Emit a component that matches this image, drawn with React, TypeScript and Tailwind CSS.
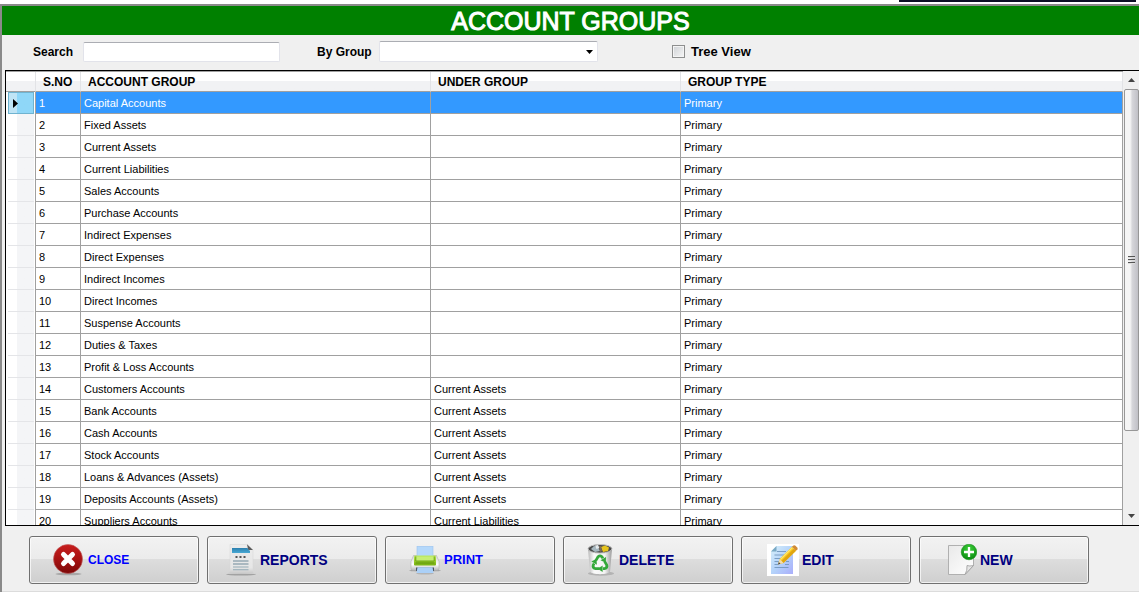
import { useState, type ReactNode } from "react";

type Account = { name: string; under: string };

const accounts: Account[] = [
  { name: "Capital Accounts", under: "" },
  { name: "Fixed Assets", under: "" },
  { name: "Current Assets", under: "" },
  { name: "Current Liabilities", under: "" },
  { name: "Sales Accounts", under: "" },
  { name: "Purchase Accounts", under: "" },
  { name: "Indirect Expenses", under: "" },
  { name: "Direct Expenses", under: "" },
  { name: "Indirect Incomes", under: "" },
  { name: "Direct Incomes", under: "" },
  { name: "Suspense Accounts", under: "" },
  { name: "Duties & Taxes", under: "" },
  { name: "Profit & Loss Accounts", under: "" },
  { name: "Customers Accounts", under: "Current Assets" },
  { name: "Bank Accounts", under: "Current Assets" },
  { name: "Cash Accounts", under: "Current Assets" },
  { name: "Stock Accounts", under: "Current Assets" },
  { name: "Loans & Advances (Assets)", under: "Current Assets" },
  { name: "Deposits Accounts (Assets)", under: "Current Assets" },
  { name: "Suppliers Accounts", under: "Current Liabilities" },
];

function Icon({ children }: { children: ReactNode }) {
  return (
    <svg viewBox="0 0 32 32" className="h-8 w-8 shrink-0" aria-hidden="true">
      {children}
    </svg>
  );
}

function CloseIcon() {
  return (
    <Icon>
      <defs>
        <linearGradient id="closeFill" x1="0" y1="0" x2="0" y2="1">
          <stop offset="0" stopColor="#c81e1e" />
          <stop offset="0.5" stopColor="#a81212" />
          <stop offset="1" stopColor="#7c0a0a" />
        </linearGradient>
      </defs>
      <ellipse cx="15.500" cy="30" rx="13" ry="1.3" fill="#a8a8a8" />
      <circle cx="15" cy="15" r="14.500" fill="url(#closeFill)" stroke="#c06060" strokeWidth="0.6" />
      <path d="M10.500 10.500l9 9M19.500 10.500l-9 9" stroke="#fff" strokeWidth="5" strokeLinecap="round" />
    </Icon>
  );
}

function ReportIcon() {
  return (
    <Icon>
      <defs>
        <linearGradient id="reportPage" x1="0" y1="0" x2="0" y2="1">
          <stop offset="0" stopColor="#ececec" />
          <stop offset="0.8" stopColor="#e6e6e6" />
          <stop offset="1" stopColor="#c9c9c9" />
        </linearGradient>
        <linearGradient id="reportBar" x1="0" y1="0" x2="0" y2="1">
          <stop offset="0" stopColor="#2b7fae" />
          <stop offset="1" stopColor="#49a9d4" />
        </linearGradient>
      </defs>
      <ellipse cx="16" cy="30.3" rx="15" ry="1.3" fill="#a2a2a2" />
      <path d="M5 .5h17l6 5.5v20l1 3.500H3.500l1.500-3.500z" fill="url(#reportPage)" stroke="#d6d6d6" strokeWidth="0.500" />
      <path d="M22 .3l6 5.700h-4.800z" fill="#5c5c5c" />
      <path d="M7 4h15.500l1.500 2.500h1V9H7z" fill="url(#reportBar)" />
      <path d="M10.500 13h2M14.500 13h2M18.500 13h2" stroke="#555" strokeWidth="1.800" />
      <path d="M8 17h15.500M8 20h15.500" stroke="#6f8a99" strokeWidth="1.100" />
      <path d="M8 23h15.500M8 25.700h15.500" stroke="#93a9b4" strokeWidth="1.100" />
    </Icon>
  );
}

function PrintIcon() {
  return (
    <Icon>
      <defs>
        <linearGradient id="printGreen" x1="0" y1="0" x2="0" y2="1">
          <stop offset="0" stopColor="#b9e860" />
          <stop offset="0.5" stopColor="#9bd12a" />
          <stop offset="1" stopColor="#76b010" />
        </linearGradient>
        <linearGradient id="printBody" x1="0" y1="0" x2="0" y2="1">
          <stop offset="0" stopColor="#d4d4d4" />
          <stop offset="0.6" stopColor="#fdfdfd" />
          <stop offset="1" stopColor="#b5b5b5" />
        </linearGradient>
      </defs>
      <ellipse cx="16" cy="26.500" rx="16" ry="1.200" fill="#a3a3a3" />
      <ellipse cx="16" cy="29.500" rx="9" ry="0.900" fill="#b4b4b4" />
      <path d="M4.500 11.500h23l2.500 6v7q0 2-2 2H4q-2 0-2-2v-7z" fill="url(#printBody)" stroke="#aaa" strokeWidth="0.500" />
      <rect x="8" y="2.300" width="16" height="11" fill="#b4d8fb" stroke="#9cc4ee" strokeWidth="0.600" />
      <rect x="5" y="11.500" width="22" height="10" rx="1" fill="url(#printGreen)" />
      <path d="M6.800 12.500v4.500h18.400v-4.500" fill="#c6ef74" stroke="#689d10" strokeWidth="0.900" />
      <path d="M6.500 19h19" stroke="#5d920c" strokeWidth="1" />
      <path d="M7 23.500h18V27H7z" fill="#4c5660" />
      <path d="M8.500 23.300h15L24.500 29h-17z" fill="#abd0f7" />
    </Icon>
  );
}

function RecycleArm({ turn }: { turn: number }) {
  return (
    <g transform={`rotate(${turn} 16 19.5)`}>
      <path d="M11.800 16.600l2.300-3.900q1.900-1.800 3.800 0l1 1.700" fill="none" stroke="#34a83a" strokeWidth="2.700" />
      <path d="M16.500 16.200l5.500-3.200-.2 5.800z" fill="#34a83a" />
    </g>
  );
}

function DeleteIcon() {
  return (
    <Icon>
      <defs>
        <linearGradient id="binSide" x1="0" y1="0" x2="1" y2="0">
          <stop offset="0" stopColor="#b9b9b9" />
          <stop offset="0.25" stopColor="#fafafa" />
          <stop offset="0.7" stopColor="#f3f3f3" />
          <stop offset="1" stopColor="#9b9b9b" />
        </linearGradient>
      </defs>
      <ellipse cx="17" cy="29.500" rx="13" ry="2.200" fill="#b3b3b3" />
      <path d="M4 5l2 22.500c1 3.500 19 3.500 20 0L28 5z" fill="url(#binSide)" />
      <ellipse cx="16" cy="4.800" rx="12" ry="4.300" fill="#4b4b4b" stroke="#c2c2c2" strokeWidth="1" />
      <path d="M7 5l3-3 4 1 2 4-5 1z" fill="#a6b7bf" />
      <path d="M11 1.500l3-.5 1.500 3-3 1z" fill="#e4eaed" />
      <path d="M17 3l4-1.500 4 2-1 3.500-5 1z" fill="#e6c41e" />
      <path d="M15 2l2 0 1 5-2 1z" fill="#7c6a59" />
      <RecycleArm turn={0} />
      <RecycleArm turn={120} />
      <RecycleArm turn={240} />
    </Icon>
  );
}

function EditIcon() {
  return (
    <Icon>
      <defs>
        <linearGradient id="editPage" x1="0" y1="0" x2="1" y2="1">
          <stop offset="0" stopColor="#d8f0fa" />
          <stop offset="0.5" stopColor="#b4d3fa" />
          <stop offset="1" stopColor="#a9aefb" />
        </linearGradient>
      </defs>
      <rect width="32" height="32" fill="#fff" />
      <path d="M9.500 2H26v28H4V7.500z" fill="url(#editPage)" />
      <path d="M9.500 2v5.500H4z" fill="#7aa9c4" />
      <path d="M10 7.500h9M7.500 11h10M7.500 14.500h8M7.500 17.500h6M7.500 20.500h4M7.500 23.500h14M18 20.500h4M19 17.500h3" stroke="#7296bd" strokeWidth="0.900" />
      <path d="M11 20.500l1.700-5.500L25 2.800l4 4L16.500 19z" fill="#f7c51d" />
      <path d="M14.500 17L27 4.800l2 2L16.500 19z" fill="#e0a510" />
      <path d="M13.500 15.500L25.500 3.500" stroke="#ffe66a" strokeWidth="1.200" />
      <path d="M11 20.500l1.700-5.500 3.800 4z" fill="#f3dcae" />
      <path d="M11 20.500l.8-2.500 1.700 1.700z" fill="#444" />
      <path d="M25 2.800l1.500-1.300q1-.6 2 .3l1.700 1.700q.9 1 .2 2L29 6.800z" fill="#d18a35" />
    </Icon>
  );
}

function NewIcon() {
  return (
    <Icon>
      <defs>
        <linearGradient id="newPage" x1="0" y1="0" x2="1" y2="1">
          <stop offset="0" stopColor="#e9e9e9" />
          <stop offset="1" stopColor="#ffffff" />
        </linearGradient>
        <radialGradient id="newBadge" cx="0.5" cy="0.3" r="0.7">
          <stop offset="0" stopColor="#3ed23a" />
          <stop offset="1" stopColor="#0a8a10" />
        </radialGradient>
      </defs>
      <path d="M3.500 1.500h25v20l-8.500 9H3.500z" fill="url(#newPage)" stroke="#a9a9a9" strokeWidth="0.900" />
      <path d="M28.500 21.500q-4 1-6.500 0 .5 5-2 9z" fill="#e6e6e6" stroke="#9a9a9a" strokeWidth="0.800" />
      <circle cx="24" cy="8" r="7.800" fill="url(#newBadge)" stroke="#128a14" strokeWidth="0.500" />
      <path d="M24 3v10M19 8h10" stroke="#fff" strokeWidth="2.300" />
    </Icon>
  );
}

const actions = [
  { label: "CLOSE", icon: <CloseIcon />, style: "pl-[23px] text-xs text-[#0000ff]" },
  { label: "REPORTS", icon: <ReportIcon />, style: "pl-[17px] text-sm text-[#000080]" },
  { label: "PRINT", icon: <PrintIcon />, style: "pl-[23px] text-[13px] text-[#0000ff]" },
  { label: "DELETE", icon: <DeleteIcon />, style: "pl-5 text-sm text-[#000080]" },
  { label: "EDIT", icon: <EditIcon />, style: "pl-[25px] text-sm text-[#000080]" },
  { label: "NEW", icon: <NewIcon />, style: "pl-[25px] text-sm text-[#000080]" },
];

function ScrollBar() {
  return (
    <div className="flex w-4 shrink-0 flex-col bg-[#f0f0f0] pl-px" aria-hidden="true">
      <div className="flex h-[18px] items-center justify-center">
        <svg viewBox="0 0 7 4" className="h-1 w-[7px]">
          <path d="M0 4L3.500 0 7 4z" fill="#444" />
        </svg>
      </div>
      <div className="flex h-[342px] items-center justify-center rounded-xs border border-[#979797] bg-linear-to-r from-[#f5f5f5] from-40% via-[#d6d6da] via-55% to-[#c0c0c6]">
        <svg viewBox="0 0 7 8" className="h-2 w-[7px]">
          <path d="M0 .5h7M0 3.500h7M0 6.500h7" stroke="#555" />
          <path d="M0 1.500h7M0 4.500h7M0 7.500h7" stroke="#ddd" />
        </svg>
      </div>
      <div className="mt-auto flex h-[18px] items-center justify-center">
        <svg viewBox="0 0 7 4" className="h-1 w-[7px]">
          <path d="M0 0h7L3.500 4z" fill="#444" />
        </svg>
      </div>
    </div>
  );
}

const headCell =
  "h-5 border-r border-b border-r-[#e2e3e6] border-b-[#a0a0a0] bg-linear-to-b from-white from-45% to-[#f1f2f4] to-45% p-0 pl-[7px] text-left align-middle text-xs leading-4 font-bold";
const cell = "h-[22px] border-r border-b border-[#a0a0a0] p-0 pl-[3px] leading-4 whitespace-nowrap";

export default function App() {
  const [selected, setSelected] = useState(0);

  return (
    <div className="flex h-screen flex-col overflow-hidden bg-white font-['Liberation_Sans',Arial,sans-serif] text-black">
      <div className="flex h-1 shrink-0 items-start justify-end pr-[3px]">
        <div className="h-0.5 w-[237px] bg-[#0c0f26]" />
      </div>
      <main className="flex min-h-0 flex-1 flex-col border-t-2 border-l-2 border-[#8a8a8a] bg-[#f0f0f0]">
        <h1 className="flex h-[29px] shrink-0 items-center justify-center bg-[#008000] text-[25px] leading-7 text-white [-webkit-text-stroke:1px_white]">
          ACCOUNT GROUPS
        </h1>

        <form className="flex h-[35px] shrink-0 items-center pb-0.5 pl-[31px] text-xs font-bold" onSubmit={(e) => e.preventDefault()}>
          <label htmlFor="search" className="w-[50px]">
            Search
          </label>
          <input
            id="search"
            type="text"
            className="h-5 w-[197px] rounded-xs border border-[#e2e3ea] border-t-[#abadb3] bg-white px-1 font-normal outline-none"
          />
          <label htmlFor="group" className="ml-[37px] w-[62px]">
            By Group
          </label>
          <div className="relative">
            <select
              id="group"
              className="block h-[21px] w-[219px] appearance-none rounded-xs border border-[#e2e3ea] border-t-[#abadb3] bg-white px-1 font-normal outline-none"
            >
              <option value="" />
              <option>Current Assets</option>
              <option>Current Liabilities</option>
            </select>
            <svg viewBox="0 0 7 4" className="pointer-events-none absolute top-[9px] right-[5px] h-1 w-[7px]" aria-hidden="true">
              <path d="M0 0h7L3.500 4z" fill="#000" />
            </svg>
          </div>
          <input
            id="tree"
            type="checkbox"
            className="ml-[74px] h-[13px] w-[13px] appearance-none border border-[#8e8f8f] bg-linear-to-br from-[#cfd2d6] to-[#f6f6f6] outline-1 -outline-offset-2 outline-[#f4f4f4] checked:bg-[#3399ff]"
          />
          <label htmlFor="tree" className="pl-1.5 text-[13px]">
            Tree View
          </label>
        </form>

        <section className="ml-[3px] flex min-h-0 flex-1 border-t border-b border-l border-black bg-white">
          <div className="min-w-0 flex-1 overflow-hidden border-t border-[#a0a0a0]">
            <table className="w-full table-fixed border-separate border-spacing-0 text-[11px]">
              <colgroup>
                <col className="w-[30px]" />
                <col className="w-[45px]" />
                <col className="w-[350px]" />
                <col className="w-[250px]" />
                <col />
              </colgroup>
              <thead>
                <tr>
                  <th className={headCell} aria-label="Row marker" />
                  <th className={headCell}>S.NO</th>
                  <th className={headCell}>ACCOUNT GROUP</th>
                  <th className={headCell}>UNDER GROUP</th>
                  <th className={headCell}>GROUP TYPE</th>
                </tr>
              </thead>
              <tbody>
                {accounts.map((account, i) => {
                  const active = i === selected;
                  return (
                    <tr
                      key={account.name}
                      onClick={() => setSelected(i)}
                      className={active ? "bg-[#3399ff] text-white" : "bg-white"}
                    >
                      <td className="h-[22px] border-r border-r-[#a0a0a0] bg-white p-0 pr-px pl-0.5">
                        {active ? (
                          <div className="flex h-[22px] items-center border border-[#6fb3d0] bg-linear-to-r from-[#bfe4f5] from-35% to-[#8fd7f8] to-35% pl-1">
                            <svg viewBox="0 0 5 9" className="h-[9px] w-[5px]" aria-hidden="true">
                              <path d="M0 0l5 4.500L0 9z" fill="#000" />
                            </svg>
                          </div>
                        ) : (
                          <div className="h-[22px] border-b border-[#e4e5e8] bg-linear-to-r from-white from-35% to-[#f4f5f7] to-35%" />
                        )}
                      </td>
                      <td className={cell}>{i + 1}</td>
                      <td className={cell}>{account.name}</td>
                      <td className={cell}>{account.under}</td>
                      <td className={cell}>Primary</td>
                    </tr>
                  );
                })}
              </tbody>
            </table>
          </div>
          <ScrollBar />
        </section>

        <footer className="flex shrink-0 gap-2 border-b border-[#dcdcdc] pt-2.5 pb-[7px] pl-[27px]">
          {actions.map((action) => (
            <button
              key={action.label}
              type="button"
              className={`flex h-12 w-[170px] items-center gap-[3px] rounded-[3px] border border-[#707070] bg-[linear-gradient(#f2f2f2,#ebebeb_48%,#dddddd_48%,#cfcfcf)] text-left leading-4 font-bold inset-ring inset-ring-white/70 ${action.style}`}
            >
              {action.icon}
              {action.label}
            </button>
          ))}
        </footer>
      </main>
    </div>
  );
}
